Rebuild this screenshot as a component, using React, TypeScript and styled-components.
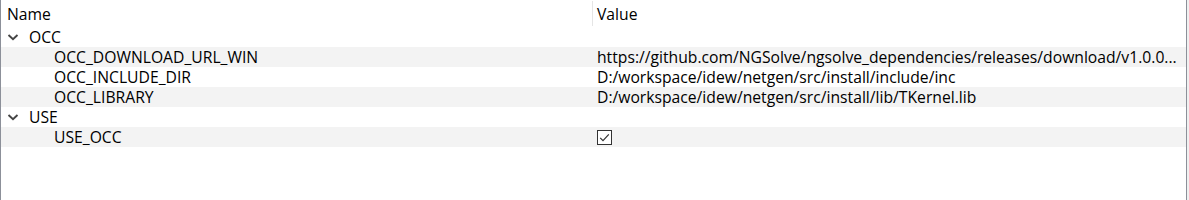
import React from "react";
import styled, { createGlobalStyle } from "styled-components";

const Global = createGlobalStyle`
  html, body { margin: 0; padding: 0; background: #f0f0f0; }
  body { font-family: "Open Sans", "Noto Sans", sans-serif; font-size: 15.7px; color: #000; }
`;

const Panel = styled.div`
  width: 1185px;
  height: 200px;
  background: #fff;
  border-left: 1px solid #8c9099;
  border-right: 1px solid #8c9099;
  display: flex;
  flex-direction: column;
  overflow: hidden;
`;

const Header = styled.div`
  display: grid;
  grid-template-columns: 591px 1fr;
  height: 27px;
  align-items: stretch;
`;

const HeaderCell = styled.div<{ $sep?: boolean }>`
  display: flex;
  align-items: center;
  padding-left: ${(p) => (p.$sep ? "4px" : "6px")};
  border-left: ${(p) => (p.$sep ? "1px solid #e5e5e5" : "none")};
  margin: ${(p) => (p.$sep ? "1px 0 1px 0" : "0")};
`;

const Row = styled.div<{ $alt: boolean }>`
  display: grid;
  grid-template-columns: 592px 1fr;
  height: 20px;
  align-items: center;
  background: ${(p) => (p.$alt ? "#f3f3f3" : "#fff")};
  white-space: nowrap;
`;

const NameCell = styled.div<{ $depth: number }>`
  display: flex;
  align-items: center;
  padding-left: ${(p) => (p.$depth === 0 ? 6 : 53)}px;
  overflow: hidden;
`;

const Chevron = styled.svg`
  width: 12px;
  height: 8px;
  margin-right: 10px;
  flex: none;
`;

const ValueCell = styled.div`
  padding-left: 4px;
  padding-right: 4px;
  overflow: hidden;
  white-space: nowrap;
`;

const CheckBox = styled.div`
  width: 15px;
  height: 15px;
  box-sizing: border-box;
  border: 1px solid #333;
  background: #fff;
  display: flex;
  align-items: center;
  justify-content: center;
`;

type Item = {
  name: string;
  depth: number;
  value?: string;
  check?: boolean;
};

const items: Item[] = [
  { name: "OCC", depth: 0 },
  {
    name: "OCC_DOWNLOAD_URL_WIN",
    depth: 1,
    value: "https://github.com/NGSolve/ngsolve_dependencies/releases/download/v1.0.0...",
  },
  { name: "OCC_INCLUDE_DIR", depth: 1, value: "D:/workspace/idew/netgen/src/install/include/inc" },
  { name: "OCC_LIBRARY", depth: 1, value: "D:/workspace/idew/netgen/src/install/lib/TKernel.lib" },
  { name: "USE", depth: 0 },
  { name: "USE_OCC", depth: 1, check: true },
];

export default function App() {
  return (
    <>
      <Global />
      <Panel>
        <Header>
          <HeaderCell>Name</HeaderCell>
          <HeaderCell $sep>Value</HeaderCell>
        </Header>
        {items.map((it, i) => (
          <Row key={it.name} $alt={i % 2 === 1}>
            <NameCell $depth={it.depth}>
              {it.depth === 0 && (
                <Chevron viewBox="0 0 12 8">
                  <path d="M1.5 2 L6 6.2 L10.5 2" fill="none" stroke="#444" strokeWidth="1.9" />
                </Chevron>
              )}
              {it.name}
            </NameCell>
            <ValueCell>
              {it.check ? (
                <CheckBox>
                  <svg width="13" height="13" viewBox="0 0 13 13">
                    <path d="M2.2 6.8 L5 9.6 L10.8 3.4" fill="none" stroke="#333" strokeWidth="1.2" />
                  </svg>
                </CheckBox>
              ) : (
                it.value
              )}
            </ValueCell>
          </Row>
        ))}
      </Panel>
    </>
  );
}
